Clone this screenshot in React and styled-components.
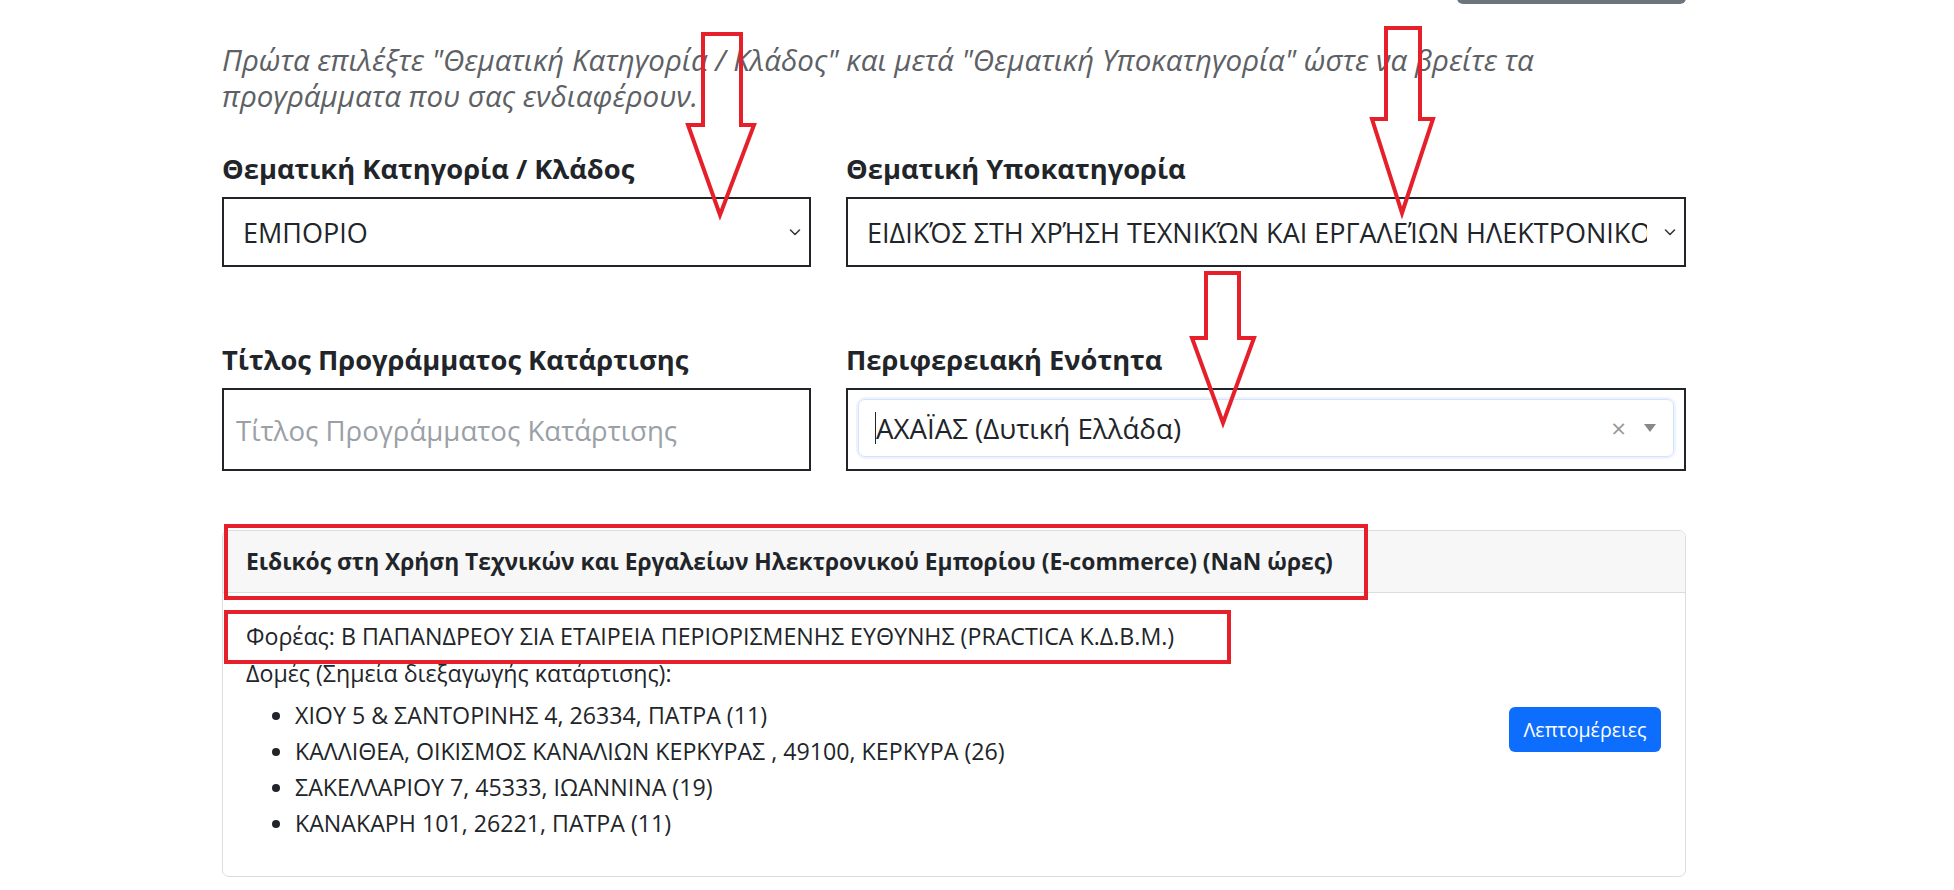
import React from 'react'
import styled, { createGlobalStyle } from 'styled-components'

const GlobalStyle = createGlobalStyle`
  body {
    margin: 0;
    font-family: "Open Sans", "Noto Sans", sans-serif;
    color: #212529;
    background: #fff;
  }
`

const arrows = [
  { x1: 703, x2: 741, top: 34, head: 125, hx1: 688, hx2: 754, tipX: 720, tipY: 215 },
  { x1: 1386, x2: 1420, top: 28, head: 119, hx1: 1372, hx2: 1433, tipX: 1402, tipY: 213 },
  { x1: 1206, x2: 1239, top: 273, head: 338, hx1: 1192, hx2: 1254, tipX: 1223, tipY: 423 },
]

const boxes = [
  { x: 226, y: 526, w: 1140, h: 72 },
  { x: 226, y: 612, w: 1003, h: 50 },
]

const places = [
  'ΧΙΟΥ 5 & ΣΑΝΤΟΡΙΝΗΣ 4, 26334, ΠΑΤΡΑ (11)',
  'ΚΑΛΛΙΘΕΑ, ΟΙΚΙΣΜΟΣ ΚΑΝΑΛΙΩΝ ΚΕΡΚΥΡΑΣ , 49100, ΚΕΡΚΥΡΑ (26)',
  'ΣΑΚΕΛΛΑΡΙΟΥ 7, 45333, ΙΩΑΝΝΙΝΑ (19)',
  'ΚΑΝΑΚΑΡΗ 101, 26221, ΠΑΤΡΑ (11)',
]

function Chevron() {
  return (
    <ChevronIcon viewBox="0 0 12 12">
      <polyline points="1.5,4 6,8.5 10.5,4" fill="none" stroke="#343a40" strokeWidth="1.6" strokeLinecap="round" strokeLinejoin="round" />
    </ChevronIcon>
  )
}

function App() {
  return (
    <>
      <GlobalStyle />
      <Page>
        <Container>
          <TopBar>
            <GreyButton />
          </TopBar>
          <Intro>
            Πρώτα επιλέξτε "Θεματική Κατηγορία / Κλάδος" και μετά "Θεματική Υποκατηγορία" ώστε να βρείτε τα
            <br />
            προγράμματα που σας ενδιαφέρουν.
          </Intro>
          <FormGrid>
            <Field>
              <Label>Θεματική Κατηγορία / Κλάδος</Label>
              <SelectBox>
                <SelectText>ΕΜΠΟΡΙΟ</SelectText>
                <Chevron />
              </SelectBox>
            </Field>
            <Field>
              <Label>Θεματική Υποκατηγορία</Label>
              <SelectBox>
                <SelectText>ΕΙΔΙΚΌΣ ΣΤΗ ΧΡΉΣΗ ΤΕΧΝΙΚΏΝ ΚΑΙ ΕΡΓΑΛΕΊΩΝ ΗΛΕΚΤΡΟΝΙΚΟΎ ΕΜΠΟΡΊΟΥ (E-COMMERCE)</SelectText>
                <Chevron />
              </SelectBox>
            </Field>
            <Field second>
              <Label>Τίτλος Προγράμματος Κατάρτισης</Label>
              <TextInput placeholder="Τίτλος Προγράμματος Κατάρτισης" />
            </Field>
            <Field second>
              <Label>Περιφερειακή Ενότητα</Label>
              <ComboOuter>
                <ComboInner>
                  <Caret />
                  <ComboText>ΑΧΑΪΑΣ (Δυτική Ελλάδα)</ComboText>
                  <ClearMark>×</ClearMark>
                  <DropTriangle />
                </ComboInner>
              </ComboOuter>
            </Field>
          </FormGrid>
          <Card>
            <CardHeader>
              Ειδικός στη Χρήση Τεχνικών και Εργαλείων Ηλεκτρονικού Εμπορίου (E-commerce) (NaN ώρες)
            </CardHeader>
            <CardBody>
              <BodyText>
                <Line>Φορέας: Β ΠΑΠΑΝΔΡΕΟΥ ΣΙΑ ΕΤΑΙΡΕΙΑ ΠΕΡΙΟΡΙΣΜΕΝΗΣ ΕΥΘΥΝΗΣ (PRACTICA Κ.Δ.Β.Μ.)</Line>
                <Line>Δομές (Σημεία διεξαγωγής κατάρτισης):</Line>
                <Places>
                  {places.map((p) => (
                    <Place key={p}>{p}</Place>
                  ))}
                </Places>
              </BodyText>
              <BlueButton>Λεπτομέρειες</BlueButton>
            </CardBody>
          </Card>
        </Container>
        <Overlay viewBox="0 0 1954 890">
          {arrows.map((a, i) => (
            <polygon
              key={i}
              points={`${a.x1},${a.top} ${a.x2},${a.top} ${a.x2},${a.head} ${a.hx2},${a.head} ${a.tipX},${a.tipY} ${a.hx1},${a.head} ${a.x1},${a.head}`}
              fill="none"
              stroke="#e5202a"
              strokeWidth="4"
              strokeLinejoin="miter"
            />
          ))}
          {boxes.map((b, i) => (
            <rect key={i} x={b.x} y={b.y} width={b.w} height={b.h} fill="none" stroke="#e5202a" strokeWidth="4" />
          ))}
        </Overlay>
      </Page>
    </>
  )
}

const Page = styled.div`
  position: relative;
  width: 1954px;
  height: 890px;
  overflow: hidden;
  background: #fff;
`
const Container = styled.div`
  margin-left: 222px;
  width: 1464px;
`
const TopBar = styled.div`
  display: flex;
  justify-content: flex-end;
  height: 4px;
`
const GreyButton = styled.div`
  width: 229px;
  height: 40px;
  margin-top: -36px;
  background: #6c757d;
  border-radius: 6px;
`
const Intro = styled.p`
  margin: 38px 0 0;
  font-size: 29.5px;
  line-height: 36px;
  font-style: italic;
  color: #5d6165;
  white-space: nowrap;
`
const FormGrid = styled.div`
  display: grid;
  grid-template-columns: 589px 840px;
  column-gap: 35px;
  margin-top: 40px;
`
const Field = styled.div`
  display: flex;
  flex-direction: column;
  margin-top: ${(p) => (p.second ? '78px' : '0')};
`
const Label = styled.label`
  font-size: 27.3px;
  font-weight: 700;
  line-height: 30px;
  margin-bottom: 13px;
`
const SelectBox = styled.div`
  box-sizing: border-box;
  height: 70px;
  border: 2.5px solid #212529;
  display: flex;
  align-items: center;
  padding: 0 8px 0 19px;
  gap: 17px;
`
const SelectText = styled.span`
  flex: 1;
  overflow: hidden;
  white-space: nowrap;
  font-size: 27px;
`
const ChevronIcon = styled.svg`
  width: 12px;
  height: 12px;
  flex-shrink: 0;
`
const TextInput = styled.input`
  box-sizing: border-box;
  height: 83px;
  border: 2.5px solid #212529;
  padding: 0 12px;
  font-family: inherit;
  font-size: 27.6px;
  color: #212529;
  outline: none;
  &::placeholder {
    color: #9aa0a6;
  }
`
const ComboOuter = styled.div`
  box-sizing: border-box;
  height: 83px;
  border: 2.5px solid #212529;
  padding: 9px 10px 12px;
`
const ComboInner = styled.div`
  box-sizing: border-box;
  height: 100%;
  border: 1.5px solid #d4e3fb;
  box-shadow: 0 0 0 2px #eef4fe;
  border-radius: 7px;
  display: flex;
  align-items: center;
  padding: 0 17px 0 16px;
`
const Caret = styled.span`
  width: 1px;
  height: 32px;
  background: #212529;
`
const ComboText = styled.span`
  flex: 1;
  font-size: 27.7px;
  color: #212529;
`
const ClearMark = styled.span`
  font-size: 26px;
  color: #999;
  margin-right: 18px;
`
const DropTriangle = styled.span`
  width: 0;
  height: 0;
  border-left: 6.5px solid transparent;
  border-right: 6.5px solid transparent;
  border-top: 8px solid #888;
`
const Card = styled.div`
  margin-top: 59px;
  border: 1px solid #dcdcdc;
  border-radius: 7px;
  overflow: hidden;
`
const CardHeader = styled.div`
  height: 61px;
  display: flex;
  align-items: center;
  padding: 0 23px;
  background: #f7f7f7;
  border-bottom: 1px solid #dcdcdc;
  font-size: 22.8px;
  font-weight: 700;
  white-space: nowrap;
`
const CardBody = styled.div`
  display: flex;
  align-items: center;
  padding: 25px 24px 35px 23px;
`
const BodyText = styled.div`
  flex: 1;
  font-size: 23.2px;
`
const Line = styled.div`
  line-height: 37px;
`
const Places = styled.ul`
  margin: 5px 0 0;
  padding-left: 49px;
`
const Place = styled.li`
  line-height: 36px;
`
const BlueButton = styled.button`
  width: 152px;
  height: 45px;
  border: none;
  border-radius: 6px;
  background: #0d6efd;
  color: #fff;
  font-family: inherit;
  font-size: 19.6px;
  padding: 0;
`
const Overlay = styled.svg`
  position: absolute;
  left: 0;
  top: 0;
  width: 1954px;
  height: 890px;
  pointer-events: none;
`

export default App
